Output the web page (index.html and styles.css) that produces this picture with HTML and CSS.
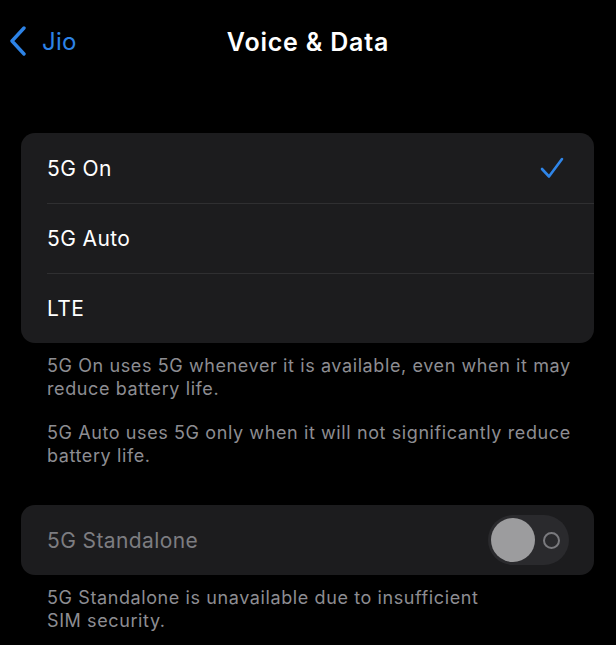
FILE: index.html
```html
<!DOCTYPE html>
<html lang="en">
<head>
    <meta charset="UTF-8">
    <meta name="viewport" content="width=device-width, initial-scale=1.0">
    <title>Voice &amp; Data</title>
    <link rel="stylesheet" href="styles.css">
</head>
<body>
    <header class="nav-bar">
        <a class="back" href="#">
            <svg class="chevron" width="18" height="30" viewBox="0 0 18 30">
                <path d="M15 2 L3 15 L15 28" fill="none" stroke="currentColor" stroke-width="3.4" stroke-linecap="round" stroke-linejoin="round"/>
            </svg>
            <span>Jio</span>
        </a>
        <h1>Voice &amp; Data</h1>
    </header>

    <section class="group">
        <div class="row">
            <span>5G On</span>
            <svg class="check" width="24" height="22" viewBox="0 0 24 22">
                <path d="M2 12 L9 19.5 L22 2" fill="none" stroke="currentColor" stroke-width="2.6" stroke-linecap="round" stroke-linejoin="round"/>
            </svg>
        </div>
        <div class="row"><span>5G Auto</span></div>
        <div class="row"><span>LTE</span></div>
    </section>
    <div class="footnote">
        <p>5G On uses 5G whenever it is available, even when it may reduce battery life.</p>
        <p>5G Auto uses 5G only when it will not significantly reduce battery life.</p>
    </div>

    <section class="group group-standalone">
        <div class="row disabled">
            <span>5G Standalone</span>
            <div class="toggle">
                <div class="thumb"></div>
                <div class="off-mark"></div>
            </div>
        </div>
    </section>
    <div class="footnote">
        <p>5G Standalone is unavailable due to insufficient<br>SIM security.</p>
    </div>
</body>
</html>
```

FILE: styles.css
```css
body {
    margin: 0;
    background-color: #000;
    color: #fff;
    font-family: Inter, "Noto Sans", sans-serif;
    height: 645px;
    overflow: hidden;
}
.nav-bar {
    position: relative;
    height: 84px;
    display: flex;
    align-items: center;
    justify-content: center;
}
.nav-bar h1 {
    margin: 0;
    font-size: 25px;
    font-weight: 600;
    letter-spacing: 0.8px;
}
.back {
    position: absolute;
    left: 9px;
    top: 26px;
    display: flex;
    align-items: center;
    gap: 15px;
    color: #2d83e6;
    text-decoration: none;
    font-size: 24px;
    letter-spacing: 0.3px;
}
.group {
    margin: 49px 22px 0 21px;
    background-color: #1c1c1e;
    border-radius: 14px;
    overflow: hidden;
}
.row {
    height: 70px;
    display: flex;
    align-items: center;
    justify-content: space-between;
    margin-left: 26px;
    padding-right: 30px;
    font-size: 21px;
    letter-spacing: 0.4px;
    border-top: 1px solid #2f2f31;
    box-sizing: border-box;
}
.row:first-child {
    border-top: none;
}
.check {
    color: #2f85e8;
}
.footnote {
    padding: 12px 30px 0 47px;
    color: #8d8d92;
    font-size: 18px;
    line-height: 22.5px;
    letter-spacing: 0.6px;
}
.footnote p {
    margin: 0 0 22px;
}
.group-standalone {
    margin-top: 38px;
}
.row.disabled {
    color: #7d7d81;
    padding-right: 25px;
}
.toggle {
    width: 81px;
    height: 50px;
    border-radius: 25px;
    background-color: #2a2a2d;
    display: flex;
    align-items: center;
    padding: 0 3px;
    box-sizing: border-box;
}
.thumb {
    width: 44px;
    height: 44px;
    border-radius: 50%;
    background-color: #9c9c9e;
}
.off-mark {
    width: 13px;
    height: 13px;
    margin-left: 8px;
    border-radius: 50%;
    border: 2px solid #7a7a7e;
}
```
